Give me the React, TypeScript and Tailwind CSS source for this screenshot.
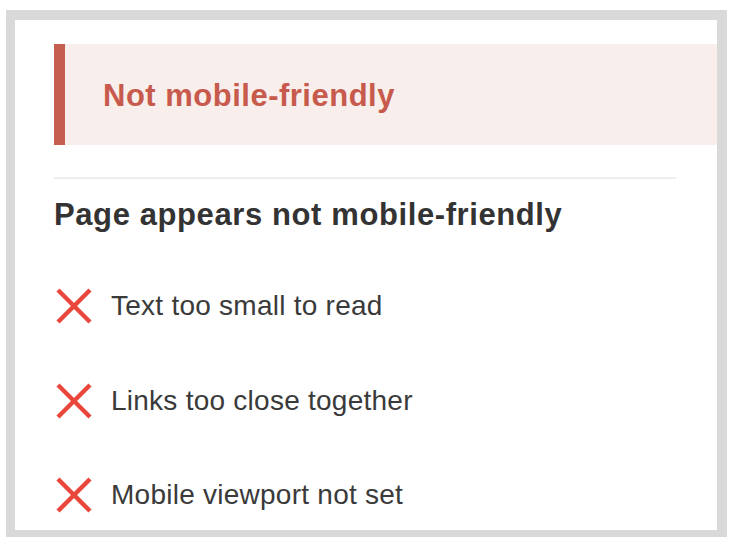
import React from "react";

function XIcon() {
  return (
    <svg width="40" height="40" viewBox="0 0 40 40" className="shrink-0">
      <line x1="4" y1="4" x2="36" y2="36" stroke="#e9473b" strokeWidth="4.5" />
      <line x1="36" y1="4" x2="4" y2="36" stroke="#e9473b" strokeWidth="4.5" />
    </svg>
  );
}

const items = ["Text too small to read", "Links too close together", "Mobile viewport not set"];

export default function App() {
  return (
    <div
      className="w-[735px] h-[550px] bg-white pt-[10px] pl-[6px] overflow-hidden"
      style={{ fontFamily: '"Liberation Sans", Arial, sans-serif' }}
    >
      <div className="w-[721px] h-[527px] border-[#d9d9d9] border-t-[10px] border-l-[9px] border-r-[10px] border-b-[7px] bg-white pl-[39px] pt-[24px]">
        <div className="flex items-center h-[101px] bg-[#f8eeeb] border-l-[11px] border-[#c65e50] pl-[38px] pt-[3px]">
          <span className="text-[31px] leading-[34px] font-bold tracking-[0.5px] text-[#c75a4c]">
            Not mobile-friendly
          </span>
        </div>
        <div className="mr-[41px]">
          <div className="mt-[32px] h-[2px] bg-[#eeeeee]" />
          <h1 className="mt-[19px] text-[31px] leading-[34px] font-bold tracking-[0.6px] text-[#333333]">
            Page appears not mobile-friendly
          </h1>
          <div className="mt-[54px] flex flex-col gap-[54.5px]">
            {items.map((t) => (
              <div key={t} className="flex items-center h-[40px] gap-[17px]">
                <XIcon />
                <span className="text-[28px] leading-[36px] tracking-[0.25px] text-[#3a3a3a]">{t}</span>
              </div>
            ))}
          </div>
        </div>
      </div>
    </div>
  );
}
